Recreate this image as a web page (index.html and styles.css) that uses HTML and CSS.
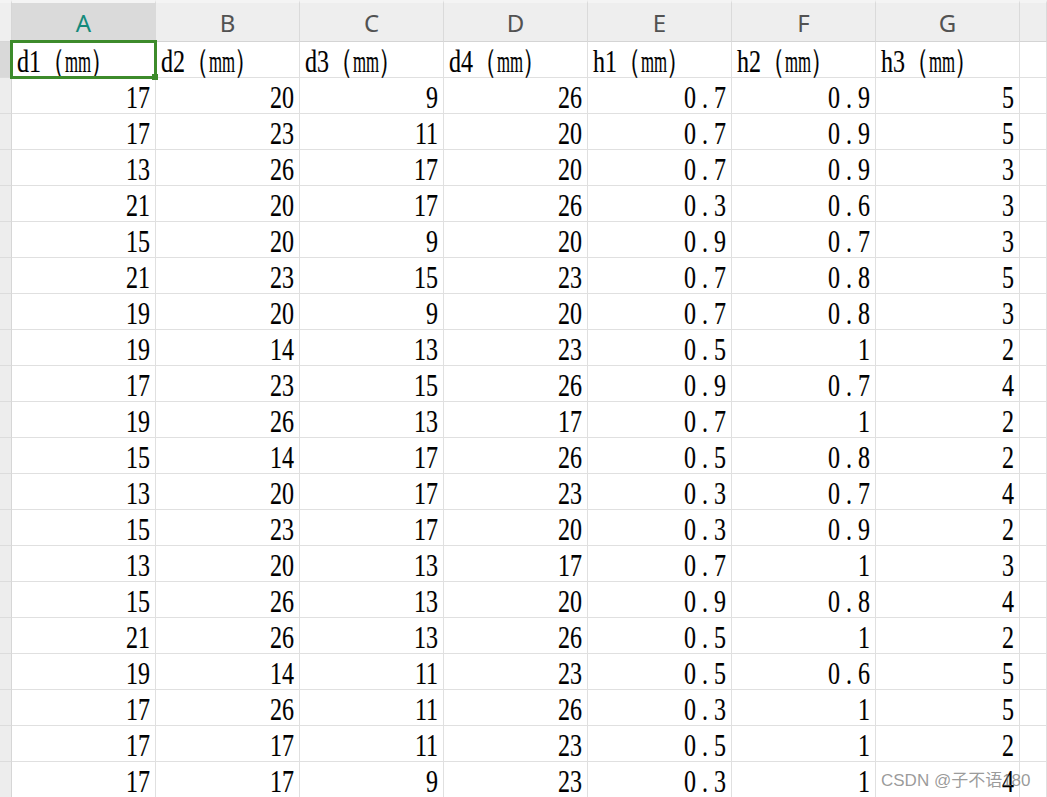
FILE: index.html
```html
<!DOCTYPE html>
<html lang="zh">
<head>
<meta charset="utf-8">
<title>Sheet</title>
<link rel="stylesheet" href="styles.css">
</head>
<body>
<div class="sheet">
  <div class="corner"></div>
  <div class="colhead active">A</div>
  <div class="colhead">B</div>
  <div class="colhead">C</div>
  <div class="colhead">D</div>
  <div class="colhead">E</div>
  <div class="colhead">F</div>
  <div class="colhead">G</div>
  <div class="colhead"></div>

  <div class="rowhead active"></div>
  <div class="cell txt sel"><span class="v">d1<span class="par">（</span><span class="mm">mm</span><span class="par">）</span></span></div>
  <div class="cell txt"><span class="v">d2<span class="par">（</span><span class="mm">mm</span><span class="par">）</span></span></div>
  <div class="cell txt"><span class="v">d3<span class="par">（</span><span class="mm">mm</span><span class="par">）</span></span></div>
  <div class="cell txt"><span class="v">d4<span class="par">（</span><span class="mm">mm</span><span class="par">）</span></span></div>
  <div class="cell txt"><span class="v">h1<span class="par">（</span><span class="mm">mm</span><span class="par">）</span></span></div>
  <div class="cell txt"><span class="v">h2<span class="par">（</span><span class="mm">mm</span><span class="par">）</span></span></div>
  <div class="cell txt"><span class="v">h3<span class="par">（</span><span class="mm">mm</span><span class="par">）</span></span></div>
  <div class="cell"></div>
</div>
<div class="watermark">CSDN @子不语180</div>
<script src="app.js"></script>
</body>
</html>
```

FILE: app.js
```js
(function () {
  var rows = [
    [17, 20, 9, 26, "0.7", "0.9", 5],
    [17, 23, 11, 20, "0.7", "0.9", 5],
    [13, 26, 17, 20, "0.7", "0.9", 3],
    [21, 20, 17, 26, "0.3", "0.6", 3],
    [15, 20, 9, 20, "0.9", "0.7", 3],
    [21, 23, 15, 23, "0.7", "0.8", 5],
    [19, 20, 9, 20, "0.7", "0.8", 3],
    [19, 14, 13, 23, "0.5", "1", 2],
    [17, 23, 15, 26, "0.9", "0.7", 4],
    [19, 26, 13, 17, "0.7", "1", 2],
    [15, 14, 17, 26, "0.5", "0.8", 2],
    [13, 20, 17, 23, "0.3", "0.7", 4],
    [15, 23, 17, 20, "0.3", "0.9", 2],
    [13, 20, 13, 17, "0.7", "1", 3],
    [15, 26, 13, 20, "0.9", "0.8", 4],
    [21, 26, 13, 26, "0.5", "1", 2],
    [19, 14, 11, 23, "0.5", "0.6", 5],
    [17, 26, 11, 26, "0.3", "1", 5],
    [17, 17, 11, 23, "0.5", "1", 2],
    [17, 17, 9, 23, "0.3", "1", 4]
  ];
  var sheet = document.querySelector(".sheet");
  rows.forEach(function (r) {
    var rh = document.createElement("div");
    rh.className = "rowhead";
    sheet.appendChild(rh);
    r.forEach(function (val) {
      var c = document.createElement("div");
      c.className = "cell num";
      var s = document.createElement("span");
      s.className = "v";
      var str = String(val);
      var i = str.indexOf(".");
      if (i >= 0) {
        s.appendChild(document.createTextNode(str.slice(0, i)));
        var d = document.createElement("span");
        d.className = "pt";
        d.textContent = ".";
        s.appendChild(d);
        s.appendChild(document.createTextNode(str.slice(i + 1)));
      } else {
        s.textContent = str;
      }
      c.appendChild(s);
      sheet.appendChild(c);
    });
    var e = document.createElement("div");
    e.className = "cell";
    sheet.appendChild(e);
  });
})();
```

FILE: styles.css
```css
* { box-sizing: border-box; }
html, body { margin: 0; padding: 0; background: #fff; overflow: hidden; }
body { width: 1047px; height: 797px; position: relative; }

.sheet {
  display: grid;
  grid-template-columns: 12px repeat(7, 144px) 1fr;
  grid-template-rows: 42px;
  grid-auto-rows: 36px;
}

.corner {
  background: #efefef;
  border-top: 3px solid #f4f4f4;
  border-right: 1px solid #d6d6d6;
  border-bottom: 1px solid #d6d6d6;
}

.colhead {
  background: #eeeeee;
  border-top: 3px solid #f4f4f4;
  border-right: 1px solid #dadada;
  border-bottom: 1px solid #d4d4d4;
  display: flex;
  align-items: center;
  justify-content: center;
  font-family: "Noto Sans", "Open Sans", sans-serif;
  font-size: 24px;
  color: #525252;
  padding-top: 1px;
}
.colhead.active {
  background: #dadada;
  color: #138a7b;
}

.rowhead {
  background: #ededed;
  border-right: 1px solid #d6d6d6;
  border-bottom: 1px solid #dcdcdc;
}
.rowhead.active { background: #d9d9d9; }

.cell {
  border-right: 1px solid #e0e0e0;
  border-bottom: 1px solid #e0e0e0;
  display: flex;
  align-items: flex-end;
  padding: 0 5px 1px 5px;
  font-family: "Liberation Serif", "Noto Sans CJK SC", serif;
  font-size: 24px;
  color: #000;
  white-space: nowrap;
  position: relative;
  -webkit-text-stroke: 0.12px #000;
}
.cell.num { justify-content: flex-end; }
.cell.txt { justify-content: flex-start; }

.v {
  display: inline-block;
  line-height: 22px;
  transform: scaleY(1.28);
  transform-origin: 50% 100%;
}
.pt { margin: 0 6px; }

.par {
  display: inline-block;
  width: 24px;
  text-align: center;
  font-family: "Liberation Serif", serif;
  transform: scaleY(1.08);
  transform-origin: 50% 80%;
}
.mm {
  display: inline-block;
  width: 25px;
  transform: scaleX(0.7);
  transform-origin: 0 50%;
}

.sel::after {
  content: "";
  position: absolute;
  left: -2px;
  top: -2px;
  right: -2px;
  bottom: -2px;
  border: 3px solid #3d8b2b;
  pointer-events: none;
}
.sel::before {
  content: "";
  position: absolute;
  right: -3px;
  bottom: -3px;
  width: 6px;
  height: 6px;
  background: #3d8b2b;
  z-index: 2;
}

.watermark {
  position: absolute;
  left: 881px;
  top: 766px;
  font-family: "Liberation Sans", "Noto Sans CJK SC", sans-serif;
  font-size: 17px;
  color: rgba(110, 110, 110, 0.7);
  white-space: nowrap;
}
```
